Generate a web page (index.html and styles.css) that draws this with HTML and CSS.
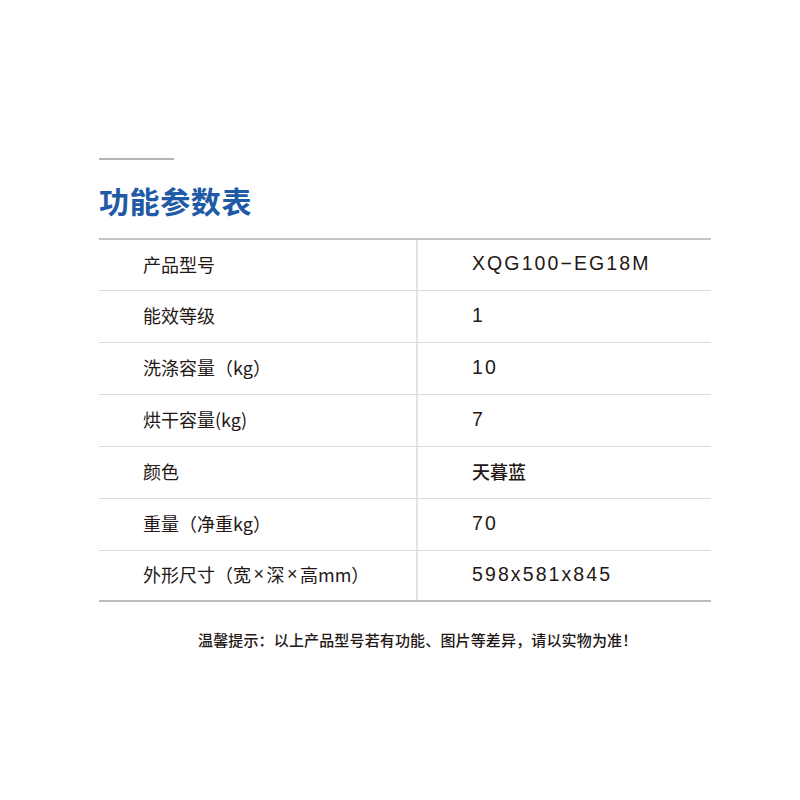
FILE: index.html
```html
<!DOCTYPE html>
<html lang="zh">
<head>
<meta charset="utf-8">
<link rel="stylesheet" href="styles.css">
</head>
<body>
<div class="page">
  <div class="rule"></div>
  <h1 class="title">功能参数表</h1>
  <div class="table">
    <div class="row"><div class="k">产品型号</div><div class="v">XQG100−EG18M</div></div>
    <div class="row"><div class="k">能效等级</div><div class="v">1</div></div>
    <div class="row"><div class="k">洗涤容量（kg）</div><div class="v">10</div></div>
    <div class="row"><div class="k">烘干容量(kg)</div><div class="v">7</div></div>
    <div class="row"><div class="k">颜色</div><div class="v cjk">天暮蓝</div></div>
    <div class="row"><div class="k">重量（净重kg）</div><div class="v">70</div></div>
    <div class="row"><div class="k">外形尺寸（宽<span class="x">×</span>深<span class="x">×</span>高mm）</div><div class="v">598x581x845</div></div>
  </div>
  <p class="note">温馨提示：以上产品型号若有功能、图片等差异，请以实物为准！</p>
</div>
</body>
</html>
```
FILE: styles.css
```css
html, body {
  margin: 0;
  padding: 0;
  background: #ffffff;
}
body {
  font-family: "Noto Sans CJK SC", "Noto Sans", sans-serif;
  color: #231815;
}
.page {
  width: 612px;
  margin-left: 99px;
  padding-top: 158px;
}
.rule {
  width: 75px;
  height: 2px;
  background: #b5b5b5;
}
.title {
  margin: 18px 0 0 0;
  height: 60px;
  font-size: 30px;
  line-height: 44px;
  font-weight: 700;
  color: #1f5aa6;
  letter-spacing: 0.6px;
}
.table {
  border-top: 2px solid #c4c4c4;
  border-bottom: 2px solid #bcbcbc;
}
.row {
  display: grid;
  grid-template-columns: 319px 1fr;
  height: 51px;
  border-bottom: 1px solid #dcdcdc;
}
.row:first-child {
  height: 50px;
}
.row:last-child {
  border-bottom: none;
  height: 49px;
}
.k {
  display: flex;
  align-items: center;
  padding-left: 44px;
  padding-bottom: 3px;
  font-size: 18px;
  border-right: 2px solid #e2e2e2;
}
.x {
  font-family: "Liberation Sans", sans-serif;
  margin: 0 2.5px;
}
.v {
  display: flex;
  align-items: center;
  padding-left: 54px;
  padding-bottom: 3px;
  font-family: "Liberation Sans", "Noto Sans CJK SC", sans-serif;
  font-size: 19.5px;
  letter-spacing: 2.1px;
}
.v.cjk {
  font-family: "Noto Sans CJK SC", sans-serif;
  font-size: 18px;
  font-weight: 500;
  letter-spacing: 0;
}
.note {
  margin: 28px 0 0 0;
  padding-left: 99px;
  font-size: 15px;
  font-weight: 500;
  line-height: 20px;
  letter-spacing: 0.15px;
}
```
